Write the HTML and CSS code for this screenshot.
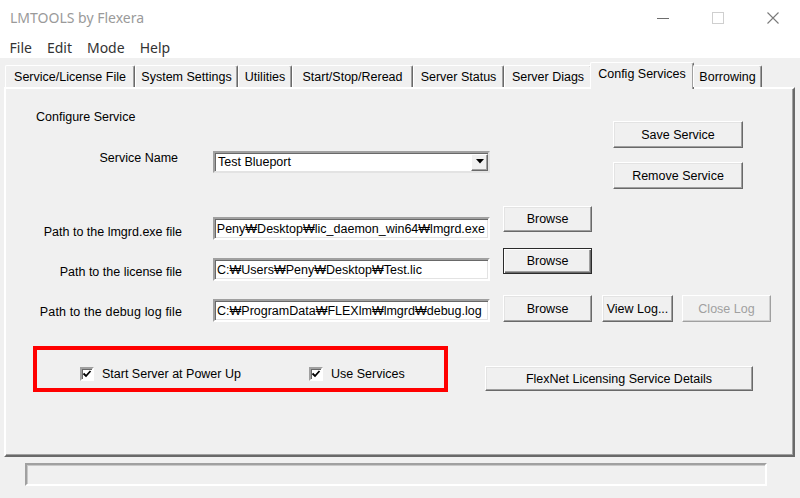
FILE: index.html
```html
<!DOCTYPE html>
<html>
<head>
  <meta charset="utf-8">
  <title>LMTOOLS by Flexera</title>
  <link rel="stylesheet" href="styles.css">
</head>
<body>
  <div class="titlebar">
    <span class="title">LMTOOLS by Flexera</span>
    <div class="controls">
      <span class="ctl"><svg width="12" height="12" viewBox="0 0 12 12"><path d="M0 6.5H12" stroke="#6d6d6d" stroke-width="1"/></svg></span>
      <span class="ctl"><svg width="12" height="12" viewBox="0 0 12 12"><rect x="0.5" y="0.5" width="11" height="11" fill="none" stroke="#cfcfcf" stroke-width="1"/></svg></span>
      <span class="ctl"><svg width="12" height="12" viewBox="0 0 12 12"><path d="M0.5 0.5L11.5 11.5M11.5 0.5L0.5 11.5" stroke="#7a7a7a" stroke-width="1.1"/></svg></span>
    </div>
  </div>

  <div class="menubar">
    <span class="menu-item">File</span>
    <span class="menu-item">Edit</span>
    <span class="menu-item">Mode</span>
    <span class="menu-item">Help</span>
  </div>

  <div class="client">
    <div class="tabs">
      <div class="tab t-license">Service/License File</div>
      <div class="tab t-system">System Settings</div>
      <div class="tab t-utils">Utilities</div>
      <div class="tab t-start">Start/Stop/Reread</div>
      <div class="tab t-status">Server Status</div>
      <div class="tab t-diags">Server Diags</div>
      <div class="tab t-config active">Config Services</div>
      <div class="tab t-borrow">Borrowing</div>
    </div>

    <div class="panel">
      <!-- service name + save/remove -->
      <div class="top">
        <div class="top-left">
          <div class="heading">Configure Service</div>
          <div class="svc-row">
            <div class="lbl svc-lbl">Service Name</div>
            <div class="combo">
              <span class="combo-text">Test Blueport</span>
              <span class="drop"><svg width="8" height="5" viewBox="0 0 8 5"><path d="M0 0H8L4 4.5Z" fill="#000"/></svg></span>
            </div>
          </div>
        </div>
        <div class="top-right">
          <div class="btn wide">Save Service</div>
          <div class="btn wide">Remove Service</div>
        </div>
      </div>

      <!-- path rows -->
      <div class="path-row row1">
        <div class="lbl">Path to the lmgrd.exe file</div>
        <div class="edit scrolled"><span>Peny₩Desktop₩lic_daemon_win64₩lmgrd.exe</span></div>
        <div class="btn browse">Browse</div>
      </div>
      <div class="path-row row2">
        <div class="lbl">Path to the license file</div>
        <div class="edit"><span>C:₩Users₩Peny₩Desktop₩Test.lic</span></div>
        <div class="btn browse default">Browse</div>
      </div>
      <div class="path-row row3">
        <div class="lbl debug-lbl">Path to the debug log file</div>
        <div class="edit"><span>C:₩ProgramData₩FLEXlm₩lmgrd₩debug.log</span></div>
        <div class="btn browse">Browse</div>
        <div class="btn viewlog">View Log...</div>
        <div class="btn closelog disabled">Close Log</div>
      </div>

      <!-- options -->
      <div class="bottom">
        <div class="highlight">
          <label class="check first"><span class="box"><svg width="10" height="10" viewBox="0 0 10 10"><path d="M1.5 4.5L4 7L8.5 2" fill="none" stroke="#000" stroke-width="1.8"/></svg></span>Start Server at Power Up</label>
          <label class="check"><span class="box"><svg width="10" height="10" viewBox="0 0 10 10"><path d="M1.5 4.5L4 7L8.5 2" fill="none" stroke="#000" stroke-width="1.8"/></svg></span>Use Services</label>
        </div>
        <div class="btn details">FlexNet Licensing Service Details</div>
      </div>
    </div>

    <div class="status"></div>
  </div>
</body>
</html>
```

FILE: styles.css
```css
body {
  margin: 0;
  width: 800px;
  height: 498px;
  overflow: hidden;
  background: #f0f0f0;
  font-family: "Liberation Sans", Arial, sans-serif;
  font-size: 12.5px;
  color: #000;
}

/* window chrome */
.titlebar {
  height: 33px;
  background: #fff;
  display: flex;
  align-items: center;
}

.title {
  margin-left: 10px;
  margin-top: 1px;
  font-family: "Noto Sans", sans-serif;
  font-size: 14px;
  color: #9a9a9a;
}

.controls {
  margin-left: auto;
  display: flex;
  height: 100%;
}

.ctl {
  width: 55px;
  display: flex;
  align-items: center;
  justify-content: center;
  margin-top: 2px;
}

.menubar {
  height: 25px;
  background: #fff;
  display: flex;
  align-items: center;
  padding-left: 2px;
  font-family: "Noto Sans", sans-serif;
  font-size: 14px;
  color: #333;
}

.menu-item {
  padding: 0 7.5px;
  margin-top: 3px;
}

.client {
  height: 440px;
}

/* tab strip */
.tabs {
  display: flex;
  align-items: flex-end;
  height: 25px;
  padding: 4px 0 0 5px;
  position: relative;
  z-index: 1;
}

.tab {
  box-sizing: border-box;
  height: 22px;
  line-height: 22px;
  text-align: center;
  border: 1px solid;
  border-color: #fff #696969 transparent #fff;
  border-bottom: none;
  box-shadow: inset -1px 0 0 #a0a0a0;
  border-top-left-radius: 2px;
  border-top-right-radius: 2px;
  white-space: nowrap;
}

.t-license { width: 130px; }
.t-system { width: 103px; }
.t-utils { width: 54px; }
.t-start { width: 121px; }
.t-status { width: 91px; }
.t-diags { width: 88px; }
.t-config { width: 100px; }
.t-borrow { width: 69px; }

.tab.active {
  height: 27px;
  line-height: 22px;
  width: 104px;
  margin: 0 -1px -2px -2px;
  background: #f0f0f0;
}

/* tab page */
.panel {
  margin: 0 5px 0 4px;
  height: 366px;
  border: 2px solid;
  border-color: #fff #696969 #696969 #fff;
  box-shadow: inset -1px -1px 0 #a0a0a0;
}

.top {
  display: flex;
  height: 117px;
}

.top-left {
  width: 607px;
}

.heading {
  margin: 20px 0 0 30px;
  line-height: 16px;
}

.svc-row {
  display: flex;
  align-items: flex-start;
  margin-top: 25px;
}

.lbl {
  width: 176px;
  text-align: right;
  line-height: 16px;
  white-space: nowrap;
}

.svc-lbl {
  width: 172px;
  padding-right: 4px;
}

.debug-lbl {
  letter-spacing: 0.15px;
}

.combo {
  margin: 1px 0 0 31px;
  width: 273px;
  height: 18px;
  background: #fff;
  border: 2px solid;
  border-color: #a0a0a0 #e3e3e3 #e3e3e3 #a0a0a0;
  box-shadow: inset 1px 1px 0 #696969;
  display: flex;
  align-items: center;
}

.combo-text {
  padding-left: 3px;
  margin-top: -1px;
}

.drop {
  margin-left: auto;
  width: 15px;
  height: 14px;
  background: #f0f0f0;
  border: 1px solid;
  border-color: #fff #696969 #696969 #fff;
  box-shadow: inset -1px -1px 0 #a0a0a0;
  display: flex;
  align-items: center;
  justify-content: center;
  padding-bottom: 1px;
}

.top-right {
  margin-top: 32px;
  display: flex;
  flex-direction: column;
  gap: 14px;
}

/* buttons */
.btn {
  box-sizing: border-box;
  display: flex;
  align-items: center;
  justify-content: center;
  height: 27px;
  background: #f0f0f0;
  border: 1px solid;
  border-color: #fff #696969 #696969 #fff;
  box-shadow: inset -1px -1px 0 #a0a0a0, inset 1px 1px 0 #e3e3e3;
  white-space: nowrap;
}

.btn.wide {
  width: 130px;
}

.btn.default {
  border-color: #2b2b2b;
  box-shadow: inset 1px 1px 0 #fff, inset -1px -1px 0 #696969, inset -2px -2px 0 #a0a0a0;
}

.btn.disabled {
  color: #a0a0a0;
  border-color: #fff #a0a0a0 #a0a0a0 #fff;
  box-shadow: inset -1px -1px 0 #d0d0d0;
}

/* path rows */
.path-row {
  display: flex;
  align-items: flex-start;
}

.edit {
  box-sizing: border-box;
  margin-left: 31px;
  width: 277px;
  height: 23px;
  background: #fff;
  border: 2px solid;
  border-color: #a0a0a0 #fff #fff #a0a0a0;
  box-shadow: inset 1px 1px 0 #696969, inset -1px -1px 0 #e3e3e3;
  display: flex;
  align-items: center;
  overflow: hidden;
  padding: 0 3px 0 2px;
  white-space: nowrap;
}

/* caret at the end: text scrolled to the right */
.edit.scrolled {
  justify-content: flex-end;
  padding-right: 3px;
  padding-left: 0;
}

.browse {
  margin-left: 13px;
  width: 89px;
}

.row1 {
  height: 42px;
}

.row1 .lbl {
  margin-top: 18px;
}

.row1 .edit {
  margin-top: 11px;
}

.row1 .btn {
  height: 26px;
}

.row2 {
  height: 47px;
}

.row2 .lbl {
  margin-top: 16px;
}

.row2 .edit {
  margin-top: 10px;
}

.row2 .btn {
  height: 26px;
}

.row3 .lbl {
  margin-top: 9px;
}

.row3 .edit {
  margin-top: 4px;
}

.viewlog {
  margin-left: 10px;
  width: 71px;
}

.closelog {
  margin-left: 9px;
  width: 89px;
}

/* options */
.bottom {
  display: flex;
  align-items: flex-start;
  margin-top: 24px;
}

.highlight {
  margin-left: 27px;
  width: 364px;
  height: 38px;
  border: 4px solid #f00;
  display: flex;
  align-items: flex-start;
  padding-left: 43px;
}

.check {
  display: flex;
  align-items: center;
  gap: 8px;
  margin-top: 17px;
}

.check.first {
  width: 229px;
}

.box {
  box-sizing: border-box;
  width: 14px;
  height: 14px;
  background: #fff;
  border: 2px solid;
  border-color: #a0a0a0 #fff #fff #a0a0a0;
  box-shadow: inset 1px 1px 0 #696969;
  display: flex;
  align-items: center;
  justify-content: center;
}

.details {
  margin: 20px 0 0 37px;
  width: 268px;
  height: 25px;
}

/* status bar */
.status {
  margin: 6px 0 0 25px;
  width: 742px;
  height: 23px;
  box-sizing: border-box;
  border: 2px solid;
  border-color: #a0a0a0 #fff #fff #a0a0a0;
  box-shadow: inset 1px 1px 0 #c8c8c8;
}
```
